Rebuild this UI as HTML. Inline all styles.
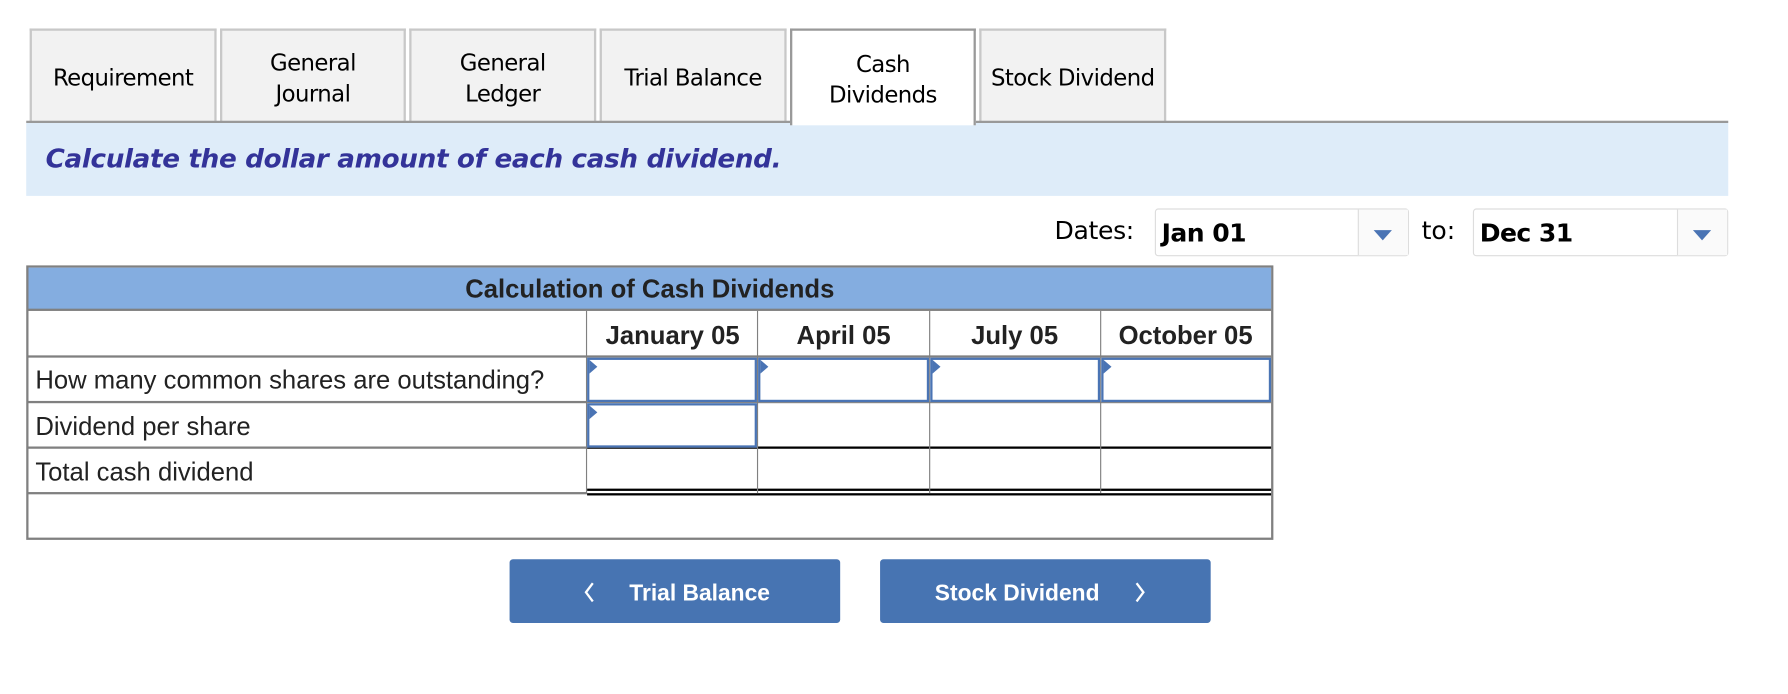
<!DOCTYPE html>
<html><head><meta charset="utf-8"><style>
html,body{margin:0;padding:0;background:#fff;width:1788px;height:694px;overflow:hidden}
#w{position:absolute;left:0;top:0;width:1560px;height:606px;transform:scale(1.140,1.139);transform-origin:0 0}
.a{position:absolute;box-sizing:border-box}
.tab{position:absolute;top:25px;height:83px;background:#f2f2f2;border:2px solid #c8c8c8;border-bottom:none;font-family:"DejaVu Sans",Verdana,sans-serif;font-size:20px;letter-spacing:-0.5px;color:#000;display:flex;align-items:center;justify-content:center;text-align:center;line-height:27px;box-sizing:border-box;white-space:nowrap;padding-top:2px}
.tab.act{background:#fff;border-color:#999;height:85px;z-index:2}
.t{font-family:"Liberation Sans",Arial,sans-serif;font-size:22.5px;color:#222}
.hd{font-family:"Liberation Sans",Arial,sans-serif;font-size:22.5px;font-weight:bold;color:#222;position:absolute;text-align:center}
.inp{position:absolute;border:2px solid #4a74b4;box-sizing:border-box;background:#fff}
.inp:before{content:"";position:absolute;left:0;top:0;border-left:7px solid #4a74b4;border-top:6px solid transparent;border-bottom:6px solid transparent}
.sel{position:absolute;top:183px;height:42px;border:1px solid #ddd;border-radius:3px;background:#fff;box-sizing:border-box;font-family:"DejaVu Sans",Verdana,sans-serif;font-weight:bold;font-size:22px;letter-spacing:-0.5px;color:#000}
.sel span{position:absolute;left:5px;top:9px}
.sel i{position:absolute;right:0;top:0;width:43px;height:40px;border-left:1px solid #ddd;background:#fafafa}
.sel i:after{content:"";position:absolute;left:13px;top:18px;border-top:9px solid #4a74b4;border-left:8px solid transparent;border-right:8px solid transparent}
.btn{position:absolute;top:491px;height:56px;width:290px;background:#4774b2;border-radius:3px;color:#fff;font-family:"Liberation Sans",Arial,sans-serif;font-weight:bold;font-size:20px}
.btn svg{position:absolute;top:20px}
</style></head><body><div id="w">
<div class="tab" style="left:26px;width:164px">Requirement</div>
<div class="tab" style="left:193px;width:163px">General<br>Journal</div>
<div class="tab" style="left:359px;width:164px">General<br>Ledger</div>
<div class="tab" style="left:526px;width:164px">Trial Balance</div>
<div class="tab act" style="left:693px;width:163px">Cash<br>Dividends</div>
<div class="tab" style="left:859px;width:164px">Stock Dividend</div>
<div class="a" style="left:23px;top:106px;width:1493px;height:2px;background:#999"></div>
<div class="a" style="left:23px;top:108px;width:1493px;height:64px;background:#deecf9"></div>
<div class="a" style="left:40px;top:127px;font-family:'DejaVu Sans',Verdana,sans-serif;font-weight:bold;font-style:italic;font-size:23px;color:#333399;letter-spacing:-0.3px">Calculate the dollar amount of each cash dividend.</div>
<div class="a" style="left:925px;top:191px;font-family:'DejaVu Sans',Verdana,sans-serif;font-size:22px;letter-spacing:-0.3px">Dates:</div>
<div class="sel" style="left:1013px;width:223px"><span>Jan 01</span><i></i></div>
<div class="a" style="left:1247px;top:191px;font-family:'DejaVu Sans',Verdana,sans-serif;font-size:22px">to:</div>
<div class="sel" style="left:1292px;width:224px"><span>Dec 31</span><i></i></div>
<div class="a" style="left:23px;top:233px;width:1094px;height:241px;border:2px solid #808080"></div>
<div class="a" style="left:25px;top:235px;width:1090px;height:37px;background:#84ade0"></div>
<div class="hd" style="left:25px;top:241px;width:1090px">Calculation of Cash Dividends</div>
<div class="a" style="left:25px;top:271px;width:1090px;height:2px;background:#808080"></div>
<div class="a" style="left:25px;top:312px;width:1090px;height:2px;background:#808080"></div>
<div class="a" style="left:25px;top:352px;width:1090px;height:2px;background:#808080"></div>
<div class="a" style="left:25px;top:392px;width:490px;height:2px;background:#808080"></div>
<div class="a" style="left:515px;top:392px;width:600px;height:2px;background:#000"></div>
<div class="a" style="left:25px;top:432px;width:490px;height:2px;background:#808080"></div>
<div class="a" style="left:515px;top:429px;width:600px;height:2px;background:#000"></div>
<div class="a" style="left:515px;top:433px;width:600px;height:2px;background:#000"></div>
<div class="a" style="left:514px;top:273px;width:1px;height:160px;background:#808080"></div>
<div class="a" style="left:664px;top:273px;width:1px;height:160px;background:#808080"></div>
<div class="a" style="left:815px;top:273px;width:1px;height:160px;background:#808080"></div>
<div class="a" style="left:965px;top:273px;width:1px;height:160px;background:#808080"></div>
<div class="hd" style="left:515px;top:282px;width:150px">January 05</div>
<div class="hd" style="left:665px;top:282px;width:150px">April 05</div>
<div class="hd" style="left:815px;top:282px;width:150px">July 05</div>
<div class="hd" style="left:965px;top:282px;width:150px">October 05</div>
<div class="a t" style="left:31px;top:321px">How many common shares are outstanding?</div>
<div class="a t" style="left:31px;top:362px">Dividend per share</div>
<div class="a t" style="left:31px;top:402px">Total cash dividend</div>
<div class="inp" style="left:515px;top:314px;width:149px;height:39px"></div>
<div class="inp" style="left:665px;top:314px;width:150px;height:39px"></div>
<div class="inp" style="left:816px;top:314px;width:149px;height:39px"></div>
<div class="inp" style="left:966px;top:314px;width:149px;height:39px"></div>
<div class="inp" style="left:515px;top:354px;width:149px;height:39px"></div>
<div class="btn" style="left:447px"><svg style="left:64px" width="12" height="18" viewBox="0 0 12 18"><path d="M9 1 L3 9 L9 17" fill="none" stroke="#fff" stroke-width="2"/></svg><span style="position:absolute;left:105px;top:19px">Trial Balance</span></div>
<div class="btn" style="left:772px"><span style="position:absolute;left:48px;top:19px">Stock Dividend</span><svg style="left:222px" width="12" height="18" viewBox="0 0 12 18"><path d="M3 1 L9 9 L3 17" fill="none" stroke="#fff" stroke-width="2"/></svg></div>
</div></body></html>
